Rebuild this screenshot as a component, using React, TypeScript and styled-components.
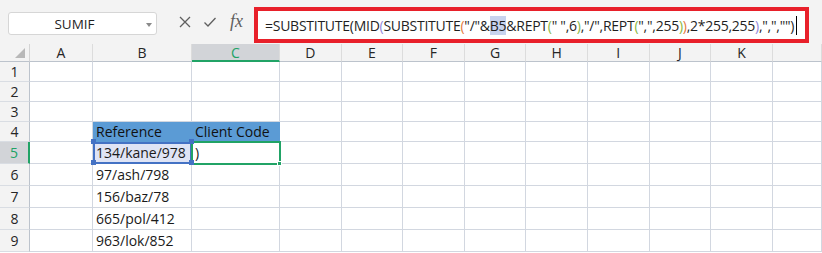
import React from "react";
import styled, { createGlobalStyle, css } from "styled-components";

const GlobalStyle = createGlobalStyle`
  html, body {
    margin: 0;
    padding: 0;
    background: #ffffff;
  }
  body {
    font-family: "Open Sans", "Noto Sans", sans-serif;
    color: #1f1f1f;
  }
  * {
    box-sizing: border-box;
  }
`;

const COLS = ["A", "B", "C", "D", "E", "F", "G", "H", "I", "J", "K", "L"];
const COL_WIDTHS = "30px 63px 99px 88px repeat(8, 61.6px) 1fr";
const ROW_HEIGHTS = "18px repeat(4, 20px) repeat(5, 22px)";

const SELECTED_COL = "C";
const SELECTED_ROW = 5;

const cellData: Record<string, string> = {
  B4: "Reference",
  C4: "Client Code",
  B5: "134/kane/978",
  C5: ")",
  B6: "97/ash/798",
  B7: "156/baz/78",
  B8: "665/pol/412",
  B9: "963/lok/852",
};

// paren level colours, like excel's edit mode
const PAREN = ["#1f1f1f", "#9488db", "#e57a3c", "#8cb83f"];

type Tok = { t: string; lvl?: number; ref?: boolean };

const formula: Tok[] = [
  { t: "=SUBSTITUTE" },
  { t: "(", lvl: 0 },
  { t: "MID" },
  { t: "(", lvl: 1 },
  { t: "SUBSTITUTE" },
  { t: "(", lvl: 2 },
  { t: '"/"&' },
  { t: "B5", ref: true },
  { t: "&REPT" },
  { t: "(", lvl: 3 },
  { t: '" ",6' },
  { t: ")", lvl: 3 },
  { t: ',"/",REPT' },
  { t: "(", lvl: 3 },
  { t: '",",255' },
  { t: ")", lvl: 3 },
  { t: ")", lvl: 2 },
  { t: ",2*255,255" },
  { t: ")", lvl: 1 },
  { t: ',",",""' },
  { t: ")", lvl: 0 },
];

function App() {
  const rows = [1, 2, 3, 4, 5, 6, 7, 8, 9];

  return (
    <>
      <GlobalStyle />
      <Page>
        <Toolbar>
          <NameBox>
            <NameText>SUMIF</NameText>
            <DropArrow />
          </NameBox>
          <FormulaIcons>
            <IconBtn>
              <svg width="12" height="12" viewBox="0 0 12 12">
                <path d="M1 1 L11 11 M11 1 L1 11" stroke="#5f5f5f" strokeWidth="1.3" fill="none" />
              </svg>
            </IconBtn>
            <IconBtn>
              <svg width="14" height="12" viewBox="0 0 14 12">
                <path d="M1.5 6.5 L5 10 L12.5 2" stroke="#5f5f5f" strokeWidth="1.3" fill="none" />
              </svg>
            </IconBtn>
            <FxGlyph>fx</FxGlyph>
          </FormulaIcons>
          <FormulaBar>
            <FormulaText>
              {formula.map((tok, i) =>
                tok.ref ? (
                  <RefSpan key={i}>{tok.t}</RefSpan>
                ) : tok.lvl !== undefined ? (
                  <span key={i} style={{ color: PAREN[tok.lvl] }}>
                    {tok.t}
                  </span>
                ) : (
                  <span key={i}>{tok.t}</span>
                )
              )}
              <Caret />
            </FormulaText>
          </FormulaBar>
        </Toolbar>

        <Sheet>
          <Corner>
            <CornerTriangle />
          </Corner>
          {COLS.map((c) => (
            <ColHead key={c} $active={c === SELECTED_COL}>
              {c === "L" ? "" : c}
            </ColHead>
          ))}
          {rows.map((r) => (
            <React.Fragment key={r}>
              <RowHead $active={r === SELECTED_ROW}>{r}</RowHead>
              {COLS.map((c) => {
                const id = `${c}${r}`;
                return (
                  <Cell
                    key={id}
                    $header={r === 4 && (c === "B" || c === "C")}
                    $ref={id === "B5"}
                    $active={id === "C5"}
                  >
                    {cellData[id]}
                    {id === "B5" && (
                      <>
                        <Handle $pos="tl" />
                        <Handle $pos="tr" />
                        <Handle $pos="bl" />
                        <Handle $pos="br" />
                      </>
                    )}
                    {id === "C5" && <FillHandle />}
                  </Cell>
                );
              })}
            </React.Fragment>
          ))}
        </Sheet>
      </Page>
    </>
  );
}

const Page = styled.div`
  width: 822px;
  height: 253px;
  overflow: hidden;
  background: #ffffff;
`;

const Toolbar = styled.div`
  height: 44px;
  background: #f3f3f3;
  display: flex;
  align-items: flex-start;
  padding: 7px 12px 0 8px;
`;

const NameBox = styled.div`
  margin-top: 5px;
  width: 149px;
  height: 23px;
  background: #ffffff;
  border: 1px solid #d6d6d6;
  border-radius: 3px;
  display: flex;
  align-items: center;
  position: relative;
`;

const NameText = styled.span`
  flex: 1;
  text-align: center;
  font-size: 13.5px;
  color: #1f1f1f;
  padding-right: 6px;
`;

const DropArrow = styled.span`
  width: 0;
  height: 0;
  margin-right: 4px;
  margin-top: 2px;
  border-left: 3.5px solid transparent;
  border-right: 3.5px solid transparent;
  border-top: 4px solid #8a8a8a;
`;

const FormulaIcons = styled.div`
  height: 30px;
  margin-left: 21px;
  display: flex;
  align-items: center;
  gap: 11px;
`;

const IconBtn = styled.span`
  width: 14px;
  display: flex;
  justify-content: center;
`;

const FxGlyph = styled.span`
  font-family: "Liberation Serif", "DejaVu Serif", serif;
  font-style: italic;
  font-size: 18px;
  color: #5f5f5f;
  margin-left: 2px;
  margin-top: -2px;
`;

const FormulaBar = styled.div`
  margin-left: 11px;
  width: 555px;
  height: 36px;
  border: 4px solid #e8202a;
  background: #ffffff;
  display: flex;
  align-items: center;
  padding-left: 7px;
`;

const FormulaText = styled.div`
  font-size: 14px;
  white-space: nowrap;
  color: #1f1f1f;
  display: flex;
  align-items: center;
  letter-spacing: -0.26px;
`;

const RefSpan = styled.span`
  background: #c7d3ee;
`;

const Caret = styled.span`
  display: inline-block;
  width: 1px;
  height: 19px;
  background: #000;
  margin-left: 2px;
`;

const Sheet = styled.div`
  display: grid;
  grid-template-columns: ${COL_WIDTHS};
  grid-template-rows: ${ROW_HEIGHTS};
`;

const headBase = css`
  background: #f3f3f3;
  font-size: 14px;
  color: #262626;
  display: flex;
  align-items: center;
  justify-content: center;
`;

const Corner = styled.div`
  ${headBase};
  border-right: 1px solid #d4d4d4;
  border-bottom: 1px solid #bcc3cc;
  position: relative;
`;

const CornerTriangle = styled.span`
  position: absolute;
  right: 4px;
  bottom: 3px;
  width: 0;
  height: 0;
  border-left: 10px solid transparent;
  border-bottom: 10px solid #b8b8b8;
`;

const ColHead = styled.div<{ $active?: boolean }>`
  ${headBase};
  border-right: 1px solid #dcdcdc;
  border-bottom: 1px solid #bcc3cc;
  ${(p) =>
    p.$active &&
    css`
      background: #d2d4d8;
      color: #21a366;
      border-bottom: 2px solid #21a366;
    `}
`;

const RowHead = styled.div<{ $active?: boolean }>`
  ${headBase};
  border-right: 1px solid #bcc3cc;
  border-bottom: 1px solid #d9dde3;
  ${(p) =>
    p.$active &&
    css`
      background: #d2d4d8;
      color: #21a366;
      border-right: 2px solid #21a366;
    `}
`;

const Cell = styled.div<{ $header?: boolean; $ref?: boolean; $active?: boolean }>`
  position: relative;
  border-right: 1px solid #d2d7e0;
  border-bottom: 1px solid #d2d7e0;
  font-size: 14px;
  color: #1a1a1a;
  padding: 0 0 0 3px;
  display: flex;
  align-items: center;
  white-space: nowrap;
  ${(p) =>
    p.$header &&
    css`
      background: #5b9bd5;
      border-color: #5b9bd5;
      color: #111;
    `}
  ${(p) =>
    p.$ref &&
    css`
      background: #dfe4f5;
      outline: 2px solid #4472c4;
      outline-offset: -2px;
    `}
  ${(p) =>
    p.$active &&
    css`
      outline: 2px solid #21a366;
      outline-offset: -1px;
      z-index: 1;
    `}
`;

const handlePos = {
  tl: "left: -2px; top: -3px;",
  tr: "right: -3px; top: -3px;",
  bl: "left: -2px; bottom: -2px;",
  br: "right: -3px; bottom: -2px;",
};

const Handle = styled.span<{ $pos: keyof typeof handlePos }>`
  position: absolute;
  width: 5px;
  height: 5px;
  background: #4472c4;
  z-index: 2;
  ${(p) => handlePos[p.$pos]}
`;

const FillHandle = styled.span`
  position: absolute;
  right: -3px;
  bottom: -3px;
  width: 5px;
  height: 5px;
  background: #21a366;
  border: 1px solid #fff;
`;

export default App;
